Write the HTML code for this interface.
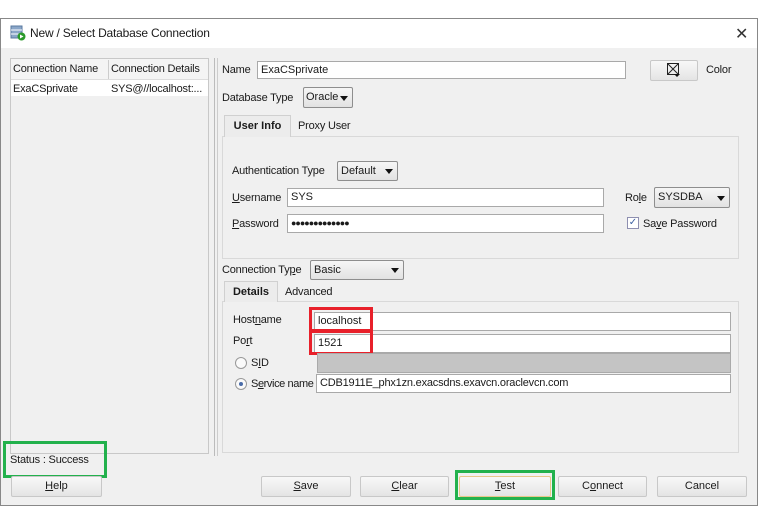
<!DOCTYPE html>
<html><head><meta charset="utf-8"><style>
*{box-sizing:border-box;margin:0;padding:0}
body{width:759px;height:507px;background:#fff;position:relative;overflow:hidden;font-family:"Liberation Sans",sans-serif;font-size:11px;color:#1a1a1a}
.a{position:absolute}
.in{position:absolute;background:#fff;border:1px solid #a9a9a9;padding-left:3px;line-height:17px;font-size:11px}
.sel{position:absolute;border:1px solid #8e8e8e;background:linear-gradient(#f6f6f6,#e2e2e2);border-radius:2px;padding-left:3px;padding-right:14px;font-size:11px;white-space:nowrap;overflow:hidden}
.sel:after{content:"";position:absolute;right:4px;top:50%;margin-top:-2px;border-left:4px solid transparent;border-right:4px solid transparent;border-top:5px solid #111}
.btn{position:absolute;height:21px;border:1px solid #c8c8c8;border-radius:2px;background:linear-gradient(#f8f8f8,#e4e4e4);text-align:center;line-height:19px;font-size:11px}
.lbl{position:absolute;font-size:11px;letter-spacing:-0.2px}
.box{position:absolute;border:1px solid #d9d9d9}
.tab{position:absolute;border:1px solid #d0d0d0;border-bottom:none;background:#ececec;font-weight:bold;text-align:center;font-size:11px}
</style></head><body>
<div class="a" style="left:0;top:18px;width:758px;height:488px;border:1px solid #888;background:#f0f0f0"></div>
<div class="a" style="left:1px;top:19px;width:756px;height:29px;background:#fff"></div>
<svg class="a" style="left:10px;top:25px" width="16" height="16" viewBox="0 0 16 16"><rect x="1" y="1" width="11" height="12" fill="#8aa6c8" stroke="#5a7aa0"/><line x1="1" y1="5" x2="12" y2="5" stroke="#fff"/><line x1="1" y1="9" x2="12" y2="9" stroke="#fff"/><circle cx="11.5" cy="11.5" r="4" fill="#2b9a2b"/><path d="M10 9.5 L13.5 11.5 L10 13.5Z" fill="#fff"/></svg>
<div class="lbl" style="left:30px;top:26px;font-size:12px">New / Select Database Connection</div>
<div class="lbl" style="left:735px;top:24px;font-size:16px;color:#333">✕</div>

<div class="a" style="left:10px;top:58px;width:199px;height:396px;border:1px solid #c8c8c8;background:#f0f0f0"></div>
<div class="a" style="left:11px;top:59px;width:197px;height:21px;background:#f4f4f4;border-bottom:1px solid #ddd"></div>
<div class="a" style="left:108px;top:60px;width:1px;height:19px;background:#ccc"></div>
<div class="lbl" style="left:13px;top:63px">Connection Name</div>
<div class="lbl" style="left:111px;top:63px">Connection Details</div>
<div class="a" style="left:11px;top:80px;width:197px;height:16px;background:#fff"></div>
<div class="lbl" style="left:13px;top:83px">ExaCSprivate</div>
<div class="lbl" style="left:111px;top:83px">SYS@//localhost:...</div>
<div class="a" style="left:214px;top:58px;width:1px;height:398px;background:#bbb"></div>
<div class="a" style="left:217px;top:58px;width:1px;height:398px;background:#ccc"></div>

<div class="lbl" style="left:222px;top:64px">Name</div>
<div class="in" style="left:257px;top:61px;width:369px;height:18px;line-height:16px">ExaCSprivate</div>
<div class="btn" style="left:650px;top:60px;width:48px;height:21px"></div>
<svg class="a" style="left:666px;top:61px" width="16" height="18" viewBox="0 0 16 18"><rect x="1.5" y="2.5" width="11" height="11" fill="none" stroke="#222"/><path d="M1.5 2.5L12.5 13.5M12.5 2.5L1.5 13.5" stroke="#222"/><path d="M8 13L14 13L11 16Z" fill="#111"/></svg>
<div class="lbl" style="left:706px;top:64px">Color</div>
<div class="lbl" style="left:222px;top:92px">Database Type</div>
<div class="sel" style="left:303px;top:87px;width:50px;height:21px;line-height:19px;padding-left:2px">Oracle</div>

<div class="box" style="left:222px;top:136px;width:517px;height:123px"></div>
<div class="tab" style="left:224px;top:115px;width:67px;height:22px;line-height:21px">User Info</div>
<div class="lbl" style="left:298px;top:120px">Proxy User</div>
<div class="lbl" style="left:232px;top:165px">Authentication Type</div>
<div class="sel" style="left:337px;top:161px;width:61px;height:20px;line-height:19px">Default</div>
<div class="lbl" style="left:232px;top:192px"><u>U</u>sername</div>
<div class="in" style="left:287px;top:188px;width:317px;height:19px">SYS</div>
<div class="lbl" style="left:625px;top:192px">Ro<u>l</u>e</div>
<div class="sel" style="left:654px;top:187px;width:76px;height:21px;line-height:19px">SYSDBA</div>
<div class="lbl" style="left:232px;top:218px"><u>P</u>assword</div>
<div class="in" style="left:287px;top:214px;width:317px;height:19px;font-size:9px;letter-spacing:-1px">●●●●●●●●●●●●●</div>
<div class="a" style="left:627px;top:217px;width:12px;height:12px;border:1px solid #8e8fb0;background:#fff;color:#3b5fa0;font-size:10px;line-height:10px;text-align:center">✓</div>
<div class="lbl" style="left:643px;top:218px">Sa<u>v</u>e Password</div>

<div class="lbl" style="left:222px;top:264px">Connection Ty<u>p</u>e</div>
<div class="sel" style="left:310px;top:260px;width:94px;height:20px;line-height:19px">Basic</div>
<div class="box" style="left:222px;top:301px;width:517px;height:152px"></div>
<div class="tab" style="left:224px;top:281px;width:54px;height:21px;line-height:21px">Details</div>
<div class="lbl" style="left:285px;top:286px">Advanced</div>
<div class="lbl" style="left:233px;top:314px">Host<u>n</u>ame</div>
<div class="in" style="left:314px;top:312px;width:417px;height:19px">localhost</div>
<div class="lbl" style="left:233px;top:335px">Po<u>r</u>t</div>
<div class="in" style="left:314px;top:334px;width:417px;height:19px">1521</div>
<div class="a" style="left:309px;top:307px;width:64px;height:25px;border:3px solid #e8202a"></div>
<div class="a" style="left:309px;top:330px;width:64px;height:25px;border:3px solid #e8202a"></div>
<div class="a" style="left:235px;top:357px;width:12px;height:12px;border:1px solid #999;border-radius:50%;background:#fafafa"></div>
<div class="lbl" style="left:251px;top:357px">S<u>I</u>D</div>
<div class="a" style="left:317px;top:353px;width:414px;height:20px;background:#c4c4c4;border:1px solid #aaa"></div>
<div class="a" style="left:235px;top:378px;width:12px;height:12px;border:1px solid #999;border-radius:50%;background:#fafafa"></div>
<div class="a" style="left:239px;top:382px;width:4px;height:4px;border-radius:50%;background:#4a6ca8"></div>
<div class="lbl" style="left:251px;top:378px;letter-spacing:-0.4px">S<u>e</u>rvice name</div>
<div class="in" style="left:316px;top:374px;width:415px;height:19px;letter-spacing:-0.2px">CDB1911E_phx1zn.exacsdns.exavcn.oraclevcn.com</div>

<div class="lbl" style="left:10px;top:454px">Status : Success</div>
<div class="a" style="left:3px;top:441px;width:104px;height:37px;border:3px solid #22b14c"></div>

<div class="btn" style="left:11px;top:476px;width:91px"><u>H</u>elp</div>
<div class="btn" style="left:261px;top:476px;width:90px"><u>S</u>ave</div>
<div class="btn" style="left:360px;top:476px;width:89px"><u>C</u>lear</div>
<div class="btn" style="left:459px;top:476px;width:92px;border-color:#e8c88a"><u>T</u>est</div>
<div class="a" style="left:455px;top:470px;width:100px;height:30px;border:3px solid #22b14c"></div>
<div class="btn" style="left:558px;top:476px;width:89px">C<u>o</u>nnect</div>
<div class="btn" style="left:657px;top:476px;width:90px">Cancel</div>
</body></html>
